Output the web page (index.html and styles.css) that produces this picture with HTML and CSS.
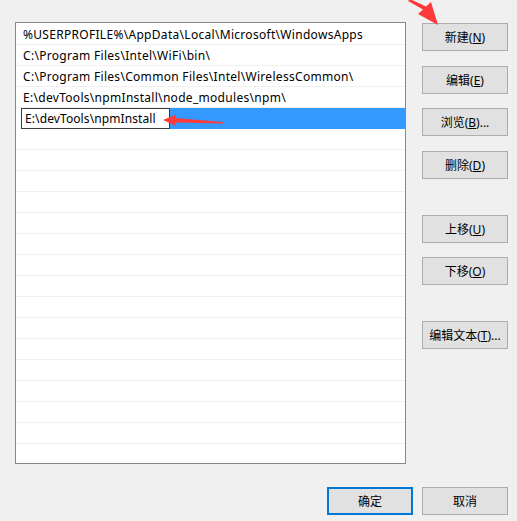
FILE: index.html
```html
<!DOCTYPE html>
<html lang="zh-CN">
<head>
<meta charset="utf-8">
<title>编辑环境变量</title>
<link rel="stylesheet" href="styles.css">
</head>
<body>
<div class="dialog">
  <div class="main">
    <div class="list">
      <div class="row">%USERPROFILE%\AppData\Local\Microsoft\WindowsApps</div>
      <div class="row">C:\Program Files\Intel\WiFi\bin\</div>
      <div class="row">C:\Program Files\Common Files\Intel\WirelessCommon\</div>
      <div class="row">E:\devTools\npmInstall\node_modules\npm\</div>
      <div class="row selected">
        <span class="lead"></span>
        <span class="editbox">E:\devTools\npmInstall</span>
        <span class="fill"></span>
      </div>
      <div class="row"></div><div class="row"></div><div class="row"></div>
      <div class="row"></div><div class="row"></div><div class="row"></div>
      <div class="row"></div><div class="row"></div><div class="row"></div>
      <div class="row"></div><div class="row"></div><div class="row"></div>
      <div class="row"></div><div class="row"></div><div class="row"></div>
      <div class="row"></div>
    </div>
    <div class="side">
      <button class="btn">新建(<u>N</u>)</button>
      <button class="btn g15">编辑(<u>E</u>)</button>
      <button class="btn g14">浏览(<u>B</u>)...</button>
      <button class="btn g15">删除(<u>D</u>)</button>
      <button class="btn g36">上移(<u>U</u>)</button>
      <button class="btn g14">下移(<u>O</u>)</button>
      <button class="btn g36">编辑文本(<u>T</u>)...</button>
    </div>
  </div>
  <div class="footer">
    <button class="btn default">确定</button>
    <button class="btn">取消</button>
  </div>
  <svg class="arrows" width="517" height="521" viewBox="0 0 517 521">
    <path d="M410 -1 L426 6.5 L431 2 L438 25 L418 14 L423 9.5 L408 1 Z" fill="#ff3a3a"/>
    <path d="M163 120 L176 114.5 L175 118 L223 122 L223 123.5 L175 122.5 L176 126 Z" fill="#ff3a3a"/>
  </svg>
</div>
</body>
</html>
```
FILE: styles.css
```css
* { box-sizing: border-box; }
html, body { margin: 0; padding: 0; }
body {
  width: 517px;
  height: 521px;
  background: #f0f0f0;
  font-family: "Noto Sans", "Noto Sans CJK SC", sans-serif;
  font-size: 12px;
  color: #000;
  overflow: hidden;
}
.dialog {
  position: relative;
  width: 517px;
  height: 521px;
  padding: 22px 9px 0 15px;
}
.main {
  display: flex;
  gap: 16px;
}
.list {
  width: 391px;
  height: 442px;
  border: 1px solid #828790;
  background: #fff;
  padding-top: 1px;
  overflow: hidden;
}
.row {
  height: 21px;
  border-bottom: 1px solid #f0f0f0;
  padding-left: 7px;
  line-height: 21px;
  letter-spacing: 0.3px;
  white-space: nowrap;
  display: flex;
  align-items: stretch;
}
.row.selected {
  padding-left: 0;
  border-bottom: none;
}
.lead { width: 5px; background: #fff; }
.editbox {
  width: 149px;
  border: 1px solid #3c3c3c;
  background: #fff;
  padding-left: 3px;
  line-height: 19px;
  letter-spacing: 0.1px;
}
.fill { flex: 1; background: #3399ff; }
.side {
  display: flex;
  flex-direction: column;
  padding-top: 1px;
}
.btn {
  width: 86px;
  height: 28px;
  border: 1px solid #adadad;
  background: #e1e1e1;
  font-family: inherit;
  font-size: 12px;
  color: #000;
  padding: 0;
  display: flex;
  align-items: center;
  justify-content: center;
}
.g14 { margin-top: 14px; }
.g15 { margin-top: 15px; }
.g36 { margin-top: 36px; }
.footer {
  display: flex;
  justify-content: flex-end;
  gap: 9px;
  margin-top: 23px;
}
.btn.default { border: 2px solid #0078d7; }
.arrows {
  position: absolute;
  left: 0;
  top: 0;
  pointer-events: none;
}
```
